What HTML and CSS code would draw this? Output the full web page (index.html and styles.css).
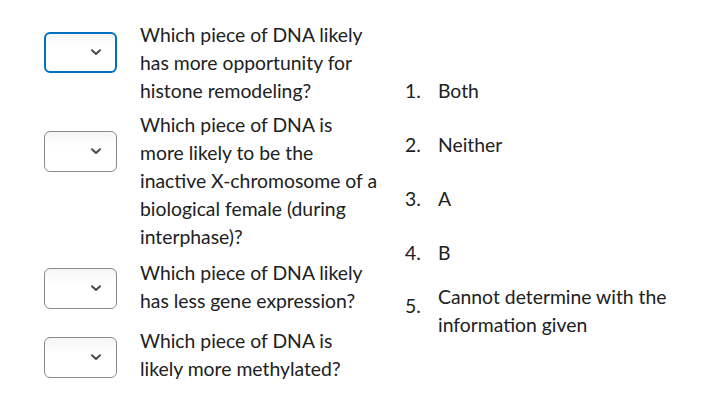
FILE: index.html
```html
<!DOCTYPE html>
<html lang="en">
<head>
<meta charset="utf-8">
<link rel="stylesheet" href="styles.css">
</head>
<body>
<div class="page">
  <div class="questions">
    <div class="row row-1">
      <div class="select select-focus select-1"><svg class="chev" width="10" height="7" viewBox="0 0 10 7"><path d="M1 1.2 L5 5 L9 1.2" fill="none" stroke="#494c4e" stroke-width="2" stroke-linecap="round" stroke-linejoin="round"/></svg></div>
      <div class="qtext">Which piece of DNA likely has more opportunity for histone remodeling?</div>
    </div>
    <div class="row row-2">
      <div class="select select-2"><svg class="chev" width="10" height="7" viewBox="0 0 10 7"><path d="M1 1.2 L5 5 L9 1.2" fill="none" stroke="#494c4e" stroke-width="2" stroke-linecap="round" stroke-linejoin="round"/></svg></div>
      <div class="qtext">Which piece of DNA is more likely to be the inactive X-chromosome of a biological female (during interphase)?</div>
    </div>
    <div class="row row-3">
      <div class="select select-3"><svg class="chev" width="10" height="7" viewBox="0 0 10 7"><path d="M1 1.2 L5 5 L9 1.2" fill="none" stroke="#494c4e" stroke-width="2" stroke-linecap="round" stroke-linejoin="round"/></svg></div>
      <div class="qtext">Which piece of DNA likely has less gene expression?</div>
    </div>
    <div class="row row-4">
      <div class="select select-4"><svg class="chev" width="10" height="7" viewBox="0 0 10 7"><path d="M1 1.2 L5 5 L9 1.2" fill="none" stroke="#494c4e" stroke-width="2" stroke-linecap="round" stroke-linejoin="round"/></svg></div>
      <div class="qtext">Which piece of DNA is likely more methylated?</div>
    </div>
  </div>
  <ol class="answers">
    <li class="answer"><span class="num">1.</span><span class="atext">Both</span></li>
    <li class="answer"><span class="num">2.</span><span class="atext">Neither</span></li>
    <li class="answer"><span class="num">3.</span><span class="atext">A</span></li>
    <li class="answer"><span class="num">4.</span><span class="atext">B</span></li>
    <li class="answer answer-long"><span class="num">5.</span><span class="atext">Cannot determine with the information given</span></li>
  </ol>
</div>
</body>
</html>
```

FILE: styles.css
```css
html, body {
  margin: 0;
  padding: 0;
  background: #ffffff;
}
body {
  font-family: Lato, "Noto Sans", sans-serif;
  font-size: 19.35px;
  line-height: 28px;
  color: #202122;
}
.page {
  display: flex;
  align-items: flex-start;
  padding: 21px 0 0 44px;
}
.questions {
  display: flex;
  flex-direction: column;
  width: 339px;
}
.row {
  display: grid;
  grid-template-columns: 73px 240px;
  column-gap: 23px;
  align-items: start;
}
.row-2 { margin-top: 6px; }
.row-3 { margin-top: 8px; }
.row-4 { margin-top: 12px; }
.select {
  box-sizing: border-box;
  height: 41px;
  border: 1px solid #868c8f;
  border-radius: 6px;
  background: linear-gradient(#f6f6f6, #ffffff 40%);
  display: flex;
  align-items: center;
  justify-content: flex-end;
  padding-right: 15px;
}
.select-focus {
  border: 2px solid #006fbf;
  padding-right: 14px;
}
.select-1 { margin-top: 11px; }
.select-2 { margin-top: 20px; }
.select-3 { margin-top: 9px; }
.select-4 { margin-top: 10px; }
.chev { display: block; }
.answers {
  list-style: none;
  margin: 43px 0 0 22px;
  padding: 0;
  display: flex;
  flex-direction: column;
}
.answer {
  display: flex;
  align-items: center;
  padding: 13px 0;
}
.answer-long {
  padding: 3px 0 0;
}
.num {
  width: 33px;
  flex: none;
  color: #202122;
}
.answer-long .num {
  margin-top: -10px;
}
.atext {
  width: 250px;
}
```
